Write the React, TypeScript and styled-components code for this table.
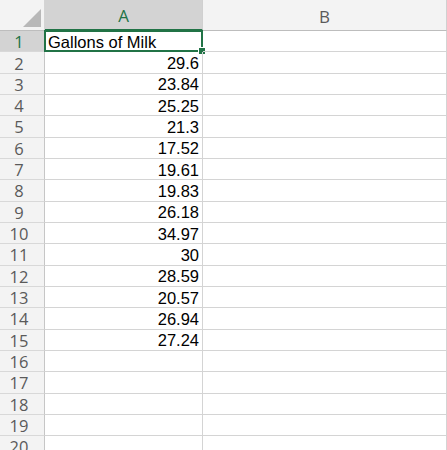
import React from "react";
import styled, { createGlobalStyle, css } from "styled-components";

const Global = createGlobalStyle`
  html, body { margin: 0; padding: 0; background: #ffffff; overflow: hidden; }
  body { width: 447px; height: 450px; }
`;

const GREEN = "#217346";

const Sheet = styled.div`
  display: grid;
  grid-template-columns: 45px 158px 1fr;
  grid-template-rows: 31px repeat(20, 21.333px);
  width: 447px;
  height: 450px;
  overflow: hidden;
  background: #fff;
`;

const Corner = styled.div`
  position: relative;
  background: #f3f3f3;
  border-right: 1px solid #d4d4d4;
  border-bottom: 1px solid #bdbdbd;
  box-sizing: border-box;
  display: flex;
  align-items: flex-end;
  justify-content: flex-end;
  padding: 0 3px 3px 0;
`;

const ColHead = styled.div<{ $sel?: boolean }>`
  box-sizing: border-box;
  display: flex;
  align-items: center;
  justify-content: center;
  font-family: "Open Sans", "Noto Sans", sans-serif;
  font-size: 17px;
  padding-top: 2px;
  background: ${(p) => (p.$sel ? "#d3d3d3" : "#f3f3f3")};
  color: ${(p) => (p.$sel ? GREEN : "#5a5a5a")};
  border-right: 1px solid #d0d0d0;
  ${(p) =>
    p.$sel
      ? css`border-bottom: 2px solid ${GREEN};`
      : css`border-bottom: 1px solid #bdbdbd;`}
`;

const RowHead = styled.div<{ $sel?: boolean }>`
  box-sizing: border-box;
  display: flex;
  align-items: center;
  justify-content: center;
  padding-right: 6px;
  padding-top: 1px;
  font-family: "Open Sans", "Noto Sans", sans-serif;
  font-size: 16.5px;
  background: ${(p) => (p.$sel ? "#d3d3d3" : "#f3f3f3")};
  color: ${(p) => (p.$sel ? GREEN : "#5a5a5a")};
  border-bottom: 1px solid #d8d8d8;
  border-right: 1px solid ${(p) => (p.$sel ? GREEN : "#c6c6c6")};
`;

const Cell = styled.div<{ $num?: boolean }>`
  position: relative;
  box-sizing: border-box;
  display: flex;
  align-items: center;
  justify-content: ${(p) => (p.$num ? "flex-end" : "flex-start")};
  padding: 2px 3px 0 3px;
  font-family: "Liberation Sans", Arial, sans-serif;
  font-size: 16.5px;
  color: #000;
  white-space: nowrap;
  border-right: 1px solid #d4d4d4;
  border-bottom: 1px solid #d4d4d4;
`;

const Selection = styled.div`
  position: absolute;
  left: -1px;
  top: -1px;
  right: -1px;
  bottom: -1px;
  border: 2px solid ${GREEN};
  pointer-events: none;
`;

const Handle = styled.div`
  position: absolute;
  right: -5px;
  bottom: -5px;
  width: 6px;
  height: 6px;
  background: ${GREEN};
  border: 1px solid #fff;
`;

const values = [
  "29.6", "23.84", "25.25", "21.3", "17.52", "19.61", "19.83", "26.18",
  "34.97", "30", "28.59", "20.57", "26.94", "27.24",
];

export default function App() {
  const rows = Array.from({ length: 20 }, (_, i) => i + 1);
  return (
    <>
      <Global />
      <Sheet>
        <Corner>
          <svg width="18" height="18" viewBox="0 0 18 18">
            <polygon points="18,0 18,18 0,18" fill="#b8b8b8" />
          </svg>
        </Corner>
        <ColHead $sel>A</ColHead>
        <ColHead>B</ColHead>
        {rows.map((r) => (
          <React.Fragment key={r}>
            <RowHead $sel={r === 1}>{r}</RowHead>
            {r === 1 ? (
              <Cell>
                Gallons of Milk
                <Selection>
                  <Handle />
                </Selection>
              </Cell>
            ) : (
              <Cell $num>{values[r - 2] ?? ""}</Cell>
            )}
            <Cell />
          </React.Fragment>
        ))}
      </Sheet>
    </>
  );
}
